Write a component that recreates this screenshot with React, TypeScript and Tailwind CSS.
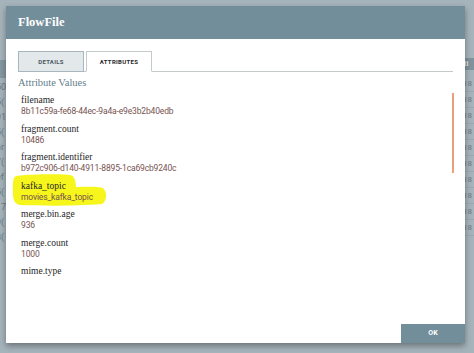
import React from "react";

const rows: [string, string | null][] = [
  ["filename", "8b11c59a-fe68-44ec-9a4a-e9e3b2b40edb"],
  ["fragment.count", "10486"],
  ["fragment.identifier", "b972c906-d140-4911-8895-1ca69cb9240c"],
  ["kafka_topic", "movies_kafka_topic"],
  ["merge.bin.age", "936"],
  ["merge.count", "1000"],
  ["mime.type", null],
];

const leftBg = ["50", "5(", "91", "5(", "ar", "7(", "ef", "5(", "17", "9(", "8("];
const rightBg = ["18", "18", "18", "18", "18", "18", "18", "18", "18", "18"];

const serif = { fontFamily: "'Liberation Serif', 'DejaVu Serif', serif" };

export default function App() {
  return (
    <div className="relative w-[474px] h-[353px] overflow-hidden bg-[#a5b3ba]" style={{ fontFamily: "Roboto, 'Liberation Sans', sans-serif" }}>
      {/* background table slivers */}
      <div className="absolute left-0 top-[60px] w-[8px] h-[18px] bg-[#8497a1]" />
      <div className="absolute left-0 top-[80px] w-[8px] flex flex-col text-[9px] leading-[15px] text-[#6d7a80]">
        {leftBg.map((t, i) => (
          <div key={i} className="-ml-[4px]">{t}</div>
        ))}
      </div>
      <div className="absolute right-0 top-[58px] w-[12px] h-[12px] bg-[#7f939d] text-[8px] text-white leading-[12px] pl-[2px]">ti</div>
      <div className="absolute right-0 top-[76px] w-[12px] flex flex-col text-[8px] leading-[15px] text-[#6d7a80] pl-[1px]">
        {rightBg.map((t, i) => (
          <div key={i} className="border-b border-[#9aa9b0]">{t}</div>
        ))}
      </div>

      {/* dialog */}
      <div className="absolute left-[6px] top-[6px] w-[459px] h-[337px] bg-white flex flex-col shadow-[0_3px_6px_rgba(0,0,0,0.35)]">
        <div className="h-[33px] bg-[#728e9b] flex items-center px-[12px] shrink-0">
          <span className="text-white text-[12.5px] font-bold" style={serif}>FlowFile</span>
        </div>
        <div className="relative flex-1 pl-[12px] pr-[12px] pt-[12px]">
          <div className="flex gap-[2px] border-b border-[#c4c9cc] h-[21px]">
            <div className="w-[66px] h-[21px] bg-[#e3e8eb] border border-[#aab6bd] flex items-center justify-center text-[6px] font-bold text-[#4d5a61] tracking-[0.3px]">DETAILS</div>
            <div className="w-[66px] h-[21px] bg-white border border-[#c4c9cc] border-b-white flex items-center justify-center text-[6px] font-bold text-[#262626] tracking-[0.3px]">ATTRIBUTES</div>
          </div>
          <div className="mt-[4px] text-[10.5px] leading-[14px] text-[#62808e]" style={serif}>Attribute Values</div>

          {/* highlight */}
          <svg className="absolute left-[6px] top-[135px]" width="96" height="33" viewBox="0 0 96 33">
            <path d="M4 2 C20 0 50 0 58 1 C63 2 64 8 64 13 C76 13 89 12 92 15 C95 19 95 27 90 30 C65 32 30 32 8 31 C2 30 1 25 1 19 C1 12 0 4 4 2 Z" fill="#f6f61c" />
          </svg>

          <div className="relative flex flex-col pl-[3px] mt-[5px]">
            {rows.map(([k, v]) => (
              <div key={k} className="h-[28.5px]">
                <div className="text-[9.5px] leading-[11px] text-[#262626]" style={serif}>{k}</div>
                {v && <div className="text-[8.5px] leading-[10px] text-[#775351] tracking-[-0.15px]">{v}</div>}
              </div>
            ))}
          </div>

          {/* scrollbar */}
          <div className="absolute left-[446px] top-[54px] w-[2px] h-[80px] bg-[#e8a07a]" />
        </div>
        <div className="absolute right-0 bottom-0 w-[64px] h-[19px] bg-[#728e9b] flex items-center justify-center text-white text-[7px] font-bold">OK</div>
      </div>
    </div>
  );
}
